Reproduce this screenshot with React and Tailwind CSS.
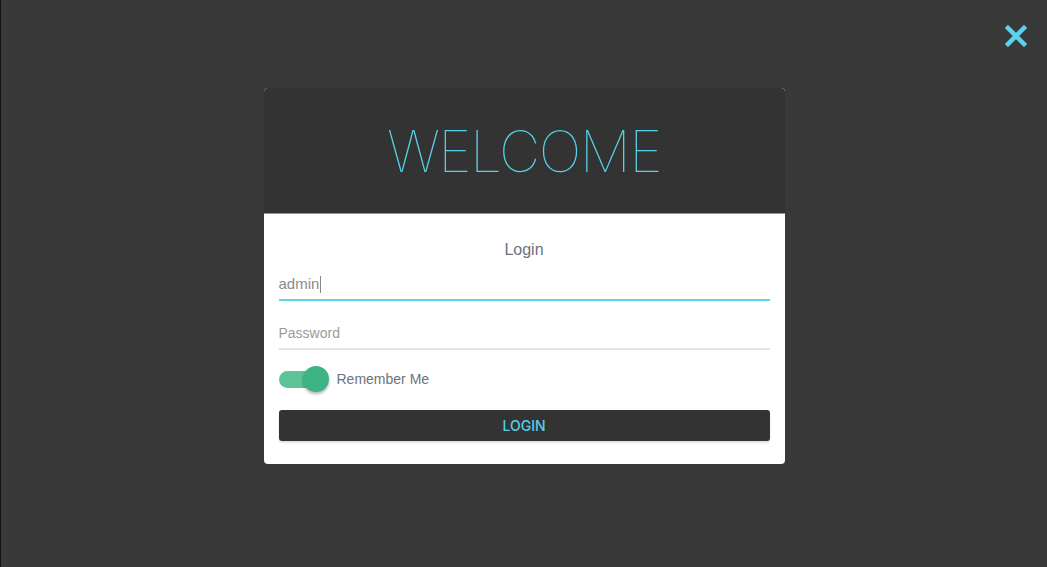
import { useState } from "react";

// Écran de connexion (modal sur fond sombre)
export default function App() {
  const [remember, setRemember] = useState(true);

  return (
    <main
      className="relative min-h-[567px] w-full bg-[#393939] border-l border-[#111] flex justify-center"
      style={{ fontFamily: "'Liberation Sans', Arial, sans-serif" }}
    >
      {/* bouton fermer */}
      <button className="absolute right-[20px] top-[25px] text-[#5ad4ec]">
        <svg width="22" height="22" viewBox="0 0 22 22">
          <path d="M3 3 L19 19 M19 3 L3 19" stroke="currentColor" strokeWidth="4.5" strokeLinecap="square" />
        </svg>
      </button>

      <div className="mt-[88px] w-[521px] h-[376px] rounded-[4px] overflow-hidden bg-white flex flex-col">
        <div className="h-[126px] bg-[#333333] flex items-center justify-center border-b border-[#999]">
          <h1
            className="text-[57px] leading-none text-[#56d0e6] tracking-[-1.5px] pt-[2px]"
            style={{ fontFamily: "Inter, 'Noto Sans', sans-serif", fontWeight: 100 }}
          >
            WELCOME
          </h1>
        </div>

        <div className="px-[15px] pt-[24px] flex flex-col">
          <p className="text-center text-[16px] text-[#6b7280]">Login</p>

          <div className="mt-[8px] border-b-2 border-[#5ad4ec] h-[31px] flex items-center">
            <span className="text-[15px] text-[#8a8a8a]">admin</span>
            <span className="w-px h-[17px] bg-[#888] ml-[1px]" />
          </div>

          <div className="mt-[17px] border-b-2 border-[#e2e2e2] h-[32px] flex items-center">
            <span className="text-[14px] text-[#9a9a9a]">Password</span>
          </div>

          <div className="mt-[16px] flex items-center gap-[8px]">
            <button
              onClick={() => setRemember(!remember)}
              className="relative w-[50px] h-[26px] flex items-center"
            >
              <span className="block w-[46px] h-[17px] rounded-full bg-[#5cc496]" />
              <span className="absolute right-[0px] top-0 w-[26px] h-[26px] rounded-full bg-[#3db383] shadow-[0_2px_3px_rgba(0,0,0,0.3)]" />
            </button>
            <span className="text-[14px] text-[#6b7280]">Remember Me</span>
          </div>

          <button
            className="mt-[18px] h-[31px] w-full rounded-[3px] bg-[#333333] text-[#56d0e6] text-[14px] font-medium shadow-[0_2px_2px_rgba(0,0,0,0.12)]"
            style={{ fontFamily: "Inter, 'Liberation Sans', sans-serif" }}
          >
            LOGIN
          </button>
        </div>
      </div>
    </main>
  );
}
